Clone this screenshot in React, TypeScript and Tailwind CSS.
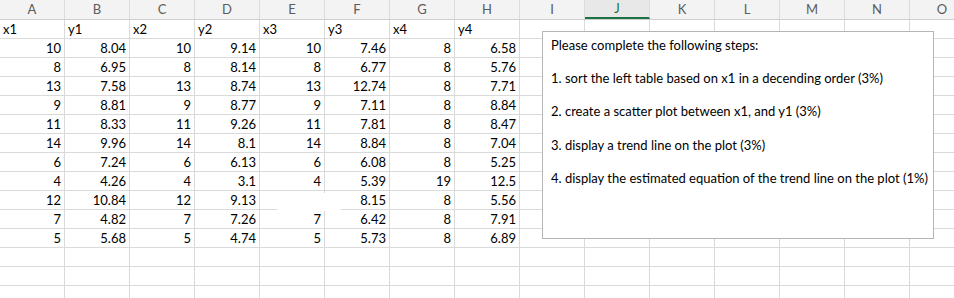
import React from "react";

const letters = ["A", "B", "C", "D", "E", "F", "G", "H", "I", "J", "K", "L", "M", "N", "O"];

const head = ["x1", "y1", "x2", "y2", "x3", "y3", "x4", "y4"];

const data: string[][] = [
  ["10", "8.04", "10", "9.14", "10", "7.46", "8", "6.58"],
  ["8", "6.95", "8", "8.14", "8", "6.77", "8", "5.76"],
  ["13", "7.58", "13", "8.74", "13", "12.74", "8", "7.71"],
  ["9", "8.81", "9", "8.77", "9", "7.11", "8", "8.84"],
  ["11", "8.33", "11", "9.26", "11", "7.81", "8", "8.47"],
  ["14", "9.96", "14", "8.1", "14", "8.84", "8", "7.04"],
  ["6", "7.24", "6", "6.13", "6", "6.08", "8", "5.25"],
  ["4", "4.26", "4", "3.1", "4", "5.39", "19", "12.5"],
  ["12", "10.84", "12", "9.13", "", "8.15", "8", "5.56"],
  ["7", "4.82", "7", "7.26", "7", "6.42", "8", "7.91"],
  ["5", "5.68", "5", "4.74", "5", "5.73", "8", "6.89"],
];

const steps = [
  "Please complete the following steps:",
  "1. sort the left table based on x1 in a decending order (3%)",
  "2. create a scatter plot between x1, and y1 (3%)",
  "3. display a trend line on the plot (3%)",
  "4. display the estimated equation of the trend line on the plot (1%)",
];

function Row({ cells, right }: { cells: string[]; right: boolean }) {
  return (
    <div className="flex h-[19px]">
      {letters.map((l, i) => (
        <div
          key={l}
          className={`w-[65px] shrink-0 border-r border-b border-[#dadada] flex items-center px-[3px] pt-[1px] ${
            right ? "justify-end" : "justify-start"
          }`}
        >
          {cells[i] ?? ""}
        </div>
      ))}
    </div>
  );
}

export default function App() {
  return (
    <div
      className="relative w-[954px] h-[298px] overflow-hidden bg-white text-[13px] text-black"
      style={{ fontFamily: "Lato, 'Open Sans', sans-serif" }}
    >
      <div className="flex h-[20px] bg-[#f3f3f3] border-b border-[#cfcfcf]">
        {letters.map((l) => (
          <div
            key={l}
            className={`w-[65px] shrink-0 border-r border-[#dcdcdc] flex items-center justify-center text-[13px] ${
              l === "J" ? "text-[#1e7145] border-b-2 border-b-[#1e7145] bg-[#e8e8e8]" : "text-[#5c5c5c]"
            }`}
          >
            {l}
          </div>
        ))}
      </div>

      <Row cells={head} right={false} />
      {data.map((r, i) => (
        <Row key={i} cells={r} right />
      ))}
      {[0, 1, 2].map((i) => (
        <Row key={"e" + i} cells={[]} right />
      ))}

      {/* gap in the gridlines around the empty E cell */}
      <div className="absolute left-[277px] top-[193px] w-[64px] h-[18px] bg-white" />

      <div className="absolute left-[542px] top-[31px] w-[392px] h-[208px] bg-white border border-[#b5b5b5] pl-[8px]">
        <div className="-mt-[3px]">
          {steps.map((s) => (
            <div key={s} className="h-[33.3px] flex items-center">
              {s}
            </div>
          ))}
        </div>
      </div>
    </div>
  );
}
